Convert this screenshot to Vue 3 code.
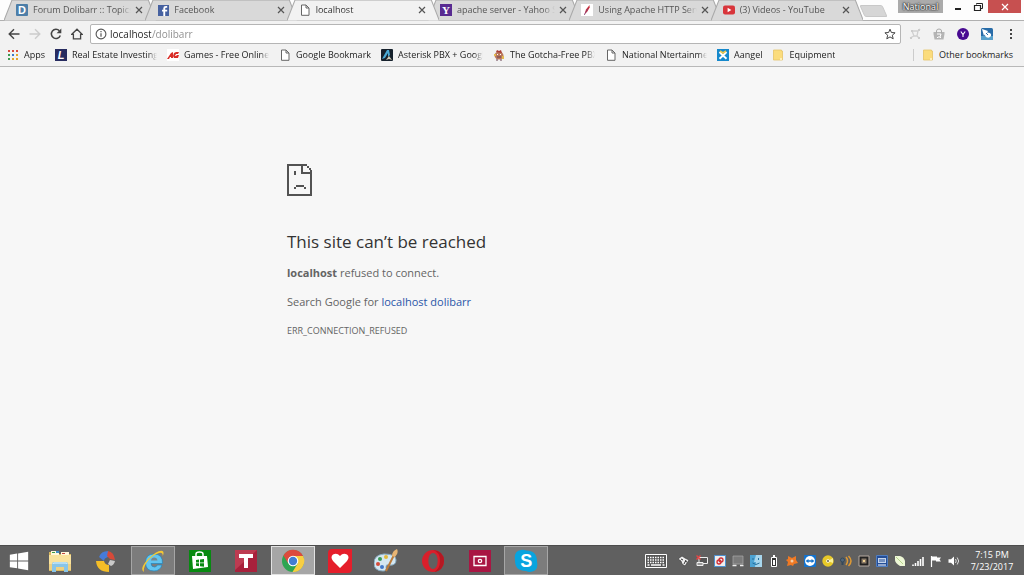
<script setup>
import { ref } from 'vue'

const address = ref('localhost/dolibarr')

const tabs = [
  { title: 'Forum Dolibarr :: Topics', icon: 'dolibarr', letter: 'D' },
  { title: 'Facebook', icon: 'facebook' },
  { title: 'localhost', icon: 'page', active: true },
  { title: 'apache server - Yahoo Search', icon: 'yahoo', letter: 'Y' },
  { title: 'Using Apache HTTP Server', icon: 'feather' },
  { title: '(3) Videos - YouTube', icon: 'youtube' },
]

const bookmarks = [
  { title: 'Apps', icon: 'apps' },
  { title: 'Real Estate Investing', icon: 'estate', letter: 'L' },
  { title: 'Games - Free Online Games', icon: 'games' },
  { title: 'Google Bookmark', icon: 'page' },
  { title: 'Asterisk PBX + Google', icon: 'asterisk' },
  { title: 'The Gotcha-Free PBX', icon: 'gotcha' },
  { title: 'National Ntertainment', icon: 'page' },
  { title: 'Aangel', icon: 'aangel' },
  { title: 'Equipment', icon: 'folder' },
]

const extensions = [
  { name: 'Share', icon: 'ext-share' },
  { name: 'Shopping', icon: 'ext-bag' },
  { name: 'Yahoo', icon: 'ext-yahoo' },
  { name: 'Pointer', icon: 'ext-pointer' },
]

const apps = [
  { name: 'File Explorer', icon: 'explorer' },
  { name: 'Web Companion', icon: 'swirl' },
  { name: 'Internet Explorer', icon: 'ie', state: 'open' },
  { name: 'Store', icon: 'store' },
  { name: 'T', icon: 'tee' },
  { name: 'Chrome', icon: 'chrome', state: 'current' },
  { name: 'Health', icon: 'heart' },
  { name: 'Paint', icon: 'paint' },
  { name: 'Opera', icon: 'opera' },
  { name: 'Recorder', icon: 'recorder' },
  { name: 'Skype', icon: 'skype', state: 'open', letter: 'S' },
]

const tray = [
  'tag', 'remote', 'link', 'display', 'finder', 'battery', 'avast', 'teamviewer',
  'disc', 'sound-wave', 'chip', 'intel', 'leaf', 'signal', 'flag', 'speaker',
]
</script>

<template>
  <div class="desktop">
    <svg class="sprite" aria-hidden="true">
      <symbol id="page" viewBox="0 0 12 12"><path d="M2.500 1h4.500l3 3v7.300H2.500ZM7 1v3h3" fill="#fff" stroke="#666" /></symbol>
      <symbol id="facebook" viewBox="0 0 12 12"><rect x="1" y="1" width="11" height="11" fill="#4661a0" /><path d="M8.200 12V7.500h2V5.800h-2V4.500q0-.8.9-.8h1.100V2H8.800Q6.300 2 6.300 4.300v1.500H5v1.700h1.300V12Z" fill="#fff" /></symbol>
      <symbol id="feather" viewBox="0 0 12 12"><rect width="12" height="12" fill="#fff" /><path d="M3.500 10 5 5.500 8.500 1l.2 2.500L6 8Z" fill="#c9303b" /><path d="m3.300 11 3.500-6.500" stroke="#843a74" stroke-width=".8" /></symbol>
      <symbol id="youtube" viewBox="0 0 12 12"><rect y="1.500" width="12" height="9" rx="2" fill="#d8353b" /><path d="m4.600 3.800 3.800 2.200-3.800 2.200Z" fill="#fff" /></symbol>
      <symbol id="apps" viewBox="0 0 12 12">
        <path d="M1 1h2v2H1ZM5 1h2v2H5ZM9 1h2v2H9Z" fill="#d94a3d" />
        <path d="M1 5h2v2H1Z" fill="#3d9b52" /><path d="M5 5h2v2H5Z" fill="#3b78c9" /><path d="M9 5h2v2H9Z" fill="#e3a52b" />
        <path d="M1 9h2v2H1Z" fill="#3d9b52" /><path d="M5 9h2v2H5ZM9 9h2v2H9Z" fill="#e3a52b" />
      </symbol>
      <symbol id="games" viewBox="0 0 12 12"><rect width="12" height="12" fill="#fff" /><path d="M0 10 4 4l2-1v6H4V8H3l-1 2ZM7 4l2-1h3l-1 2H9L8 7h1l1-1h2l-1 3H7L6 7Z" fill="#d92e28" /></symbol>
      <symbol id="asterisk" viewBox="0 0 12 12"><rect width="12" height="12" rx="1" fill="#16212c" /><path d="M1 10 6 1h2l1 5-2 2V4L4 9Z" fill="#4aa9d4" /><path d="m5 11 3-4 3 4-3-1Z" fill="#d3cdb6" /></symbol>
      <symbol id="gotcha" viewBox="0 0 12 12"><ellipse cx="6" cy="6.500" rx="4.500" ry="4" fill="#b9785d" /><path d="m3 3 1-2 2 1 2-1 1 3Z" fill="#aa3e36" /><path d="M1 5h2v2H1ZM9 7h2v3H9Z" fill="#e3b94e" /><path d="M4 5h1v1H4ZM7 5h1v1H7Z" fill="#fff" /><path d="M4 8h4M3 11h2M7 11h2" stroke="#694150" /></symbol>
      <symbol id="aangel" viewBox="0 0 12 12"><rect width="12" height="12" fill="#1689cc" /><path d="m2.500 3 3.500 3.500L9.500 3M2.500 9.700 6 6.500l3.500 3.200" fill="none" stroke="#fff" stroke-width="2" /><path d="m3 2 3 2 3-2" fill="none" stroke="#f1c94f" stroke-width="1.600" /></symbol>
      <symbol id="folder" viewBox="0 0 12 12"><path d="M1.500 1h8v1h1v9h-9Z" fill="#fbdc7c" stroke="#e6c467" stroke-width=".8" /><path d="M8 9h2v2H8Z" fill="#fff0b5" /></symbol>

      <symbol id="back" viewBox="0 0 12 12"><path d="M11.500 6H1.500M6 1.200 1.200 6 6 10.800" fill="none" stroke="currentColor" stroke-width="1.400" /></symbol>
      <symbol id="forward" viewBox="0 0 12 12"><path d="M.5 6h10M6 1.200 10.800 6 6 10.800" fill="none" stroke="currentColor" stroke-width="1.400" /></symbol>
      <symbol id="reload" viewBox="0 0 12 12"><path d="M10.300 7.500A4.600 4.600 0 1 1 9.400 2.800" fill="none" stroke="currentColor" stroke-width="1.500" /><path d="M11.300.6v4.700H6.600Z" fill="currentColor" /></symbol>
      <symbol id="home" viewBox="0 0 12 12"><path d="M.8 6.300 6 1.200l5.200 5.100H9.600v4.600H2.400V6.300Z" fill="none" stroke="currentColor" stroke-width="1.300" /></symbol>
      <symbol id="info" viewBox="0 0 12 12"><circle cx="6" cy="6" r="4.900" fill="none" stroke="#555" stroke-width="1.100" /><path d="M6 5.200v3.500M6 3v1.200" stroke="#555" stroke-width="1.200" /></symbol>
      <symbol id="star" viewBox="0 0 12 12"><path d="m6 1.200 1.400 3.300 3.700.3-2.800 2.400.9 3.600L6 8.900l-3.200 1.900.9-3.600L.9 4.800l3.700-.3Z" fill="none" stroke="#444" /></symbol>
      <symbol id="ext-share" viewBox="0 0 12 12"><path d="M3 3h6L8 8H5L1 10M9 3l2-2M8 8l2 2M3 3l2 5" fill="none" stroke="#d0d0d0" stroke-width="1.300" /><path d="M2 2h2v2H2ZM9 1h2v2H9ZM1 9h2v2H1ZM9 9h2v2H9Z" fill="#ccc" /></symbol>
      <symbol id="ext-bag" viewBox="0 0 12 12"><path d="M.5 4h11v2l-1 5.500h-9L.5 6Z" fill="#b5b5b5" /><path d="M3.500 5V3q0-2 2.500-2t2.500 2v2" fill="none" stroke="#aaa" /><path d="M4 6h4L7 9H5l-1 1M7 9l1 1" fill="none" stroke="#fff" /></symbol>
      <symbol id="ext-yahoo" viewBox="0 0 12 12"><circle cx="6" cy="6" r="6" fill="#480a91" /><path d="m3.800 3.500 2.200 3 2.200-3M6 6.500V9" fill="none" stroke="#fff" stroke-width="1.100" /></symbol>
      <symbol id="ext-pointer" viewBox="0 0 12 12"><rect width="12" height="12" rx="1.500" fill="#286ca8" /><path d="M0 8h12v3q0 1-1 1H1q-1 0-1-1Z" fill="#57a0cb" /><path d="M1 1 7 3 6 4.500q5 0 4 3.500-2 3-5 1L3.500 6.500 3 8Z" fill="#fff" /><path d="m5 5 2 2" stroke="#286ca8" /></symbol>
      <symbol id="menu" viewBox="0 0 12 12"><path d="M5 1h2v2H5ZM5 5h2v2H5ZM5 9h2v2H5Z" fill="#444" /></symbol>
      <symbol id="close" viewBox="0 0 12 12"><path d="m3 3 6 6M9 3 3 9" stroke="currentColor" stroke-width="1.200" /></symbol>
      <symbol id="minimize" viewBox="0 0 12 12"><path d="M3 8h6" stroke="#222" stroke-width="2" /></symbol>
      <symbol id="restore" viewBox="0 0 12 12"><path d="M4.500 3.500v-1h6v5H9" fill="none" stroke="#222" /><path d="M2.500 4.500h6v5h-6Z" fill="none" stroke="#222" stroke-width="1.200" /></symbol>

      <symbol id="windows" viewBox="0 0 24 24"><path d="m2 5.200 8-1.300v7.500H2ZM11 3.700l11-1.800v9.500H11ZM2 12.500h8V20l-8-1.300ZM11 12.500h11V22l-11-1.800Z" fill="#fff" /></symbol>
      <symbol id="explorer" viewBox="0 0 24 24">
        <path d="M1 3h9l1 2h12v17H1Z" fill="#d9b85e" /><path d="M3 2h8v4H3ZM13 3h8v4h-8Z" fill="#fff7db" />
        <path d="M4 3h3v1H4Z" fill="#3a9b4b" /><path d="M14 4h3v1h-3Z" fill="#c2473d" /><path d="M8 2h3v2H8Z" fill="#438dc7" />
        <path d="M1 6h22v15H1Z" fill="#f9e29c" /><path d="M1 15h22v6H1Z" fill="#eed183" />
        <path d="M4 23v-8q0-2 2-2h12q2 0 2 2v8h-4v-5H8v5Z" fill="#88c5e8" /><path d="M5 15q0-1 1-1h12q1 0 1 1" fill="none" stroke="#dff4ff" />
      </symbol>
      <symbol id="swirl" viewBox="0 0 24 24"><path d="M5 8q2-6 9-6v6q-4 1-4 4l-5-4Z" fill="#467bd8" /><path d="M14 2q6 1 7 9l-5-1-3-3Z" fill="#d64a39" /><path d="M2 12h8q1 4 5 4v7Q3 23 2 12Z" fill="#f4bd27" /><path d="m16 11 5 1q-1 4-4 5l-3-2Z" fill="#c9c9c9" /></symbol>
      <symbol id="ie" viewBox="0 0 24 24">
        <path d="M21 16q-2 6-8 6-8.500 0-8.500-8.500T13 5q9 0 8.500 9.500H10q.3 3.500 3.500 3.500 2 0 2.800-2Z" fill="#62c5f0" stroke="#2385bd" stroke-width=".7" /><path d="M10 11.500h6.500Q16 8.500 13.200 8.500T10 11.500Z" fill="#77868f" />
        <path d="M3 23Q-2 20 7 10 17 .5 21.500 2q2 1 .2 5Q22 3 18 4 12 5.500 6 13q-4 6-3 10Z" fill="#f5c832" />
      </symbol>
      <symbol id="store" viewBox="0 0 24 24"><path d="M1 1h22v22H1Z" fill="#078a10" /><path d="M4 7h15l1 11-15 2Z" fill="#fff" /><path d="M8 9V5q0-2 3.500-2T15 5v4" fill="none" stroke="#fff" stroke-width="1.500" /><path d="m8 11 3-.4v2.900H8ZM12 10.500l4-.5v3.500h-4ZM8 14.300h3v2.900l-3-.4ZM12 14.300h4v3.500l-4-.5Z" fill="#078a10" /></symbol>
      <symbol id="tee" viewBox="0 0 24 24"><path d="M1 1h22v22H1Z" fill="#a8213c" /><path d="M1 1h22L1 21Z" fill="#bd3b51" /><path d="M5 5h14v4h-5v10h-4V9H5Z" fill="#fff" /></symbol>
      <symbol id="chrome" viewBox="0 0 24 24"><circle cx="12" cy="12" r="11" fill="#2da552" /><path d="M2.500 6.500A11 11 0 0 1 22 7H12L7 14Z" fill="#dc4a3d" /><path d="M12 7h10A11 11 0 0 1 11.500 23L17 14Z" fill="#f8ce42" /><circle cx="12" cy="12" r="5.300" fill="#fff" /><circle cx="12" cy="12" r="4.200" fill="#427ed2" /></symbol>
      <symbol id="heart" viewBox="0 0 24 24"><path d="M4 0h20v20q0 4-4 4H0V4q0-4 4-4Z" fill="#e51e2b" /><path d="M12 19 5 12Q2 8 5 5.500q4-2 7 1.500 3-3.500 7-1.500 3 2.500 0 6.500Z" fill="#fff" /></symbol>
      <symbol id="paint" viewBox="0 0 24 24"><path d="M10 5Q0 6 0 14q0 8 9 8 4 0 3-4-.5-3 3-2 7 1 7-5 0-6-12-6Z" fill="#d4e7f2" stroke="#8aaec5" /><circle cx="6" cy="10" r="2" fill="#3a9a57" /><circle cx="12" cy="8" r="2" fill="#e3b93b" /><circle cx="4" cy="15" r="2" fill="#d34c3b" /><circle cx="8" cy="18" r="2" fill="#4178ca" /><path d="m12 22 8-16" stroke="#bb7b3b" stroke-width="2" /><path d="M18 7q0-5 5-7 2 4-2 8Z" fill="#e8b574" /></symbol>
      <symbol id="opera" viewBox="0 0 24 24"><circle cx="12" cy="12" r="11" fill="#d91f2b" /><path d="M12 1q11 1 11 11T12 23q7-2 7-11T12 1Z" fill="#b41822" /><ellipse cx="12" cy="12" rx="4.700" ry="8" fill="#606060" /></symbol>
      <symbol id="recorder" viewBox="0 0 24 24"><path d="M1 1h22v22H1Z" fill="#a91643" /><path d="M6 7.500h12v9H6Z" fill="none" stroke="#fff" stroke-width="1.300" /><circle cx="12" cy="12" r="2.300" fill="#fff" /><circle cx="12" cy="12" r="1" fill="#a91643" /></symbol>
      <symbol id="skype" viewBox="0 0 24 24"><path d="M7 1q3-.5 5 .5 11 0 11 11 2 10-7 10.500-2 0-4-1Q1 22 1 11.500-.5 2 7 1Z" fill="#08a4df" /></symbol>

      <symbol id="keyboard" viewBox="0 0 22 14"><path d="M.5.5h21v13H.5Z" fill="#555" stroke="#fff" /><path d="M2.500 3.500h17M2.500 6h17M2.500 8.500h17" stroke="#fff" stroke-width="1.500" stroke-dasharray="1.500 1" /><path d="M2.500 11h2M6 11h10M17.500 11h2" stroke="#fff" stroke-width="1.500" /></symbol>
      <symbol id="tag" viewBox="0 0 12 12"><path d="m0 4 4-3 3 2 4 2-4 6-3-2-1-3Z" fill="#eee" stroke="#333" stroke-width=".6" /><path d="m3 4 2 1M8 5 6 9M7 6l2 1" stroke="#333" /></symbol>
      <symbol id="remote" viewBox="0 0 12 12"><path d="M3 2.500h8.500v6H3Z" fill="#555" stroke="#eee" /><path d="M1 7.500h6v3H1Z" fill="#999" stroke="#eee" /><path d="m.5.500 4 4m0-4-4 4" stroke="#e34646" stroke-width="1.400" /></symbol>
      <symbol id="link" viewBox="0 0 12 12"><path d="M.5.5h11v11H.5Z" fill="#eee" stroke="#4d91d1" /><ellipse cx="5" cy="7" rx="2" ry="2" fill="none" stroke="#d22e35" stroke-width="1.300" /><ellipse cx="7" cy="5" rx="2" ry="2" fill="none" stroke="#d22e35" stroke-width="1.300" /></symbol>
      <symbol id="display" viewBox="0 0 12 12"><path d="M1 1h10v8H1Z" fill="#7b7b7b" stroke="#aaa" stroke-width=".7" /><path d="M.5 10.500h4M8 10.500h3.500" stroke="#eee" stroke-width="1.300" /></symbol>
      <symbol id="finder" viewBox="0 0 12 12"><path d="M0 0h12v12H0Z" fill="#4da3d3" /><path d="M6 0h6v12H5l1-5H4Z" fill="#a7d6ed" /><path d="M3 3v2M8.500 3v2M2.500 8Q6 11 9.500 8" fill="none" stroke="#246e9b" /></symbol>
      <symbol id="battery" viewBox="0 0 12 12"><path d="M3.500 2.500h5v9h-5Z" fill="#333" stroke="#fff" /><path d="M5 0h2v2H5ZM5 5h2v5H5Z" fill="#fff" /></symbol>
      <symbol id="avast" viewBox="0 0 12 12"><path d="m2 1 4 2 4-2v4l2 3-4 1-1 2-2-1-4 1 1-4-2-2 2-1Z" fill="#ef7924" /><circle cx="6" cy="6" r="1.500" fill="#f4cba4" /></symbol>
      <symbol id="teamviewer" viewBox="0 0 12 12"><rect width="12" height="12" rx="1" fill="#1373ce" /><circle cx="6" cy="6" r="5" fill="#fff" /><path d="m1.500 6 3-2v1.300h3V4l3 2-3 2V6.700h-3V8Z" fill="#1373ce" /></symbol>
      <symbol id="disc" viewBox="0 0 12 12"><circle cx="6" cy="6" r="5.700" fill="#e8c928" /><path d="m6 6 5-3v5Z" fill="#f8f099" /><circle cx="6" cy="6" r="1.800" fill="#fff" /><circle cx="6" cy="6" r=".9" fill="#5a532c" /></symbol>
      <symbol id="sound-wave" viewBox="0 0 12 12"><circle cx="2.500" cy="5" r="2" fill="#536678" stroke="#34495b" /><path d="M2.500 7v3" stroke="#34495b" stroke-width="2" /><path d="M6 2q3 4 0 8M8.500 1q5 5 0 10" fill="none" stroke="#dd9935" stroke-width="1.500" /></symbol>
      <symbol id="chip" viewBox="0 0 12 12"><path d="M1 1h10v10H1Z" fill="#222" stroke="#b5a9a0" /><path d="M3.500 3.500h5v5h-5Z" fill="#8b7b68" /><path d="M5 5h2v2H5Z" fill="#f2d493" /></symbol>
      <symbol id="intel" viewBox="0 0 12 12"><path d="M.5.5h11v11H.5Z" fill="#244e98" stroke="#507ec1" /><path d="M2 3h8v5H2Z" fill="#c4d4eb" /><path d="M2 10h8" stroke="#fff" /><path d="M4 4v3M6 4v3M8 4v3" stroke="#244e98" /></symbol>
      <symbol id="leaf" viewBox="0 0 12 12"><path d="M1 1h5q4 1 5 5v5H6Q1 8 1 5Z" fill="#edf7d5" /><path d="m2 2 7 7" stroke="#b5d48b" /></symbol>
      <symbol id="signal" viewBox="0 0 12 12"><path d="M1 11V9.500M3.500 11V8M6 11V6M8.500 11V4M11 11V2" stroke="#fff" stroke-width="1.600" /></symbol>
      <symbol id="flag" viewBox="0 0 12 12"><path d="M1.500 1v11" stroke="#fff" stroke-width="1.200" /><path d="M2 1.500h5v1h4l-1.500 2 1.500 2H6v-1H2Z" fill="#fff" /></symbol>
      <symbol id="speaker" viewBox="0 0 12 12"><path d="M.5 4.300H3L6 1.500v9L3 7.700H.5Z" fill="#fff" /><path d="M7.500 4q1.500 2 0 4M9.200 2.500q3 3.500 0 7" fill="none" stroke="#ddd" /></symbol>
    </svg>

    <header class="browser">
      <div class="titlebar">
        <nav class="tabs" aria-label="Tabs">
          <div v-for="tab in tabs" :key="tab.title" class="tab" :class="{ active: tab.active }">
            <svg class="tab-shape" viewBox="0 0 152 21" preserveAspectRatio="none" aria-hidden="true"><path d="M0 20.500 8 0H144L152 20.500" /></svg>
            <button class="tab-label">
              <span v-if="tab.letter" class="letter" :class="tab.icon">{{ tab.letter }}</span>
              <svg v-else class="icon"><use :href="'#' + tab.icon" /></svg>
              <span class="fade">{{ tab.title }}</span>
            </button>
            <button class="tab-close" :aria-label="'Close ' + tab.title"><svg class="icon"><use href="#close" /></svg></button>
          </div>
        </nav>
        <button class="new-tab" aria-label="New tab"></button>
        <div class="window-controls">
          <button class="profile">National</button>
          <button class="control" aria-label="Minimize"><svg class="icon"><use href="#minimize" /></svg></button>
          <button class="control" aria-label="Restore"><svg class="icon"><use href="#restore" /></svg></button>
          <button class="control quit" aria-label="Close window"><svg class="icon"><use href="#close" /></svg></button>
        </div>
      </div>

      <div class="toolbar">
        <div class="nav-buttons">
          <button aria-label="Back"><svg class="icon"><use href="#back" /></svg></button>
          <button aria-label="Forward" disabled><svg class="icon"><use href="#forward" /></svg></button>
          <button aria-label="Reload"><svg class="icon"><use href="#reload" /></svg></button>
          <button aria-label="Home"><svg class="icon"><use href="#home" /></svg></button>
        </div>
        <div class="omnibox">
          <svg class="icon" aria-hidden="true"><use href="#info" /></svg>
          <input v-model="address" type="text" aria-label="Address" spellcheck="false" />
          <button aria-label="Bookmark this page"><svg class="icon"><use href="#star" /></svg></button>
        </div>
        <div class="extensions">
          <button v-for="ext in extensions" :key="ext.name" :aria-label="ext.name"><svg class="icon"><use :href="'#' + ext.icon" /></svg></button>
          <button aria-label="Menu"><svg class="icon"><use href="#menu" /></svg></button>
        </div>
      </div>

      <nav class="bookmarks" aria-label="Bookmarks">
        <a v-for="mark in bookmarks" :key="mark.title" href="#" class="bookmark">
          <span v-if="mark.letter" class="letter" :class="mark.icon">{{ mark.letter }}</span>
          <svg v-else class="icon"><use :href="'#' + mark.icon" /></svg>
          <span class="fade">{{ mark.title }}</span>
        </a>
        <a href="#" class="bookmark other"><svg class="icon"><use href="#folder" /></svg><span>Other bookmarks</span></a>
      </nav>
    </header>

    <main class="page">
      <section class="error">
        <svg class="sad-page" viewBox="0 0 25 32" shape-rendering="crispEdges" aria-hidden="true">
          <path d="M0 0h20v2H2v28h21V10H14V2h2v6h7V6h2v26H0ZM20 2h2v2h-2ZM22 4h2v2h-2ZM7 7h2v4H7ZM9 21h8v2H9ZM7 23h2v2H7ZM17 23h2v2h-2Z" fill="#535353" />
        </svg>
        <h1>This site can’t be reached</h1>
        <p><strong>localhost</strong> refused to connect.</p>
        <p>Search Google for <a href="#">localhost dolibarr</a></p>
        <p class="code">ERR_CONNECTION_REFUSED</p>
      </section>
    </main>

    <footer class="taskbar">
      <button class="start" aria-label="Start"><svg><use href="#windows" /></svg></button>
      <div class="apps">
        <button v-for="app in apps" :key="app.name" class="app" :class="app.state" :aria-label="app.name">
          <svg><use :href="'#' + app.icon" /></svg>
          <span v-if="app.letter" class="app-letter">{{ app.letter }}</span>
        </button>
      </div>
      <div class="tray">
        <button class="keyboard" aria-label="Touch keyboard"><svg><use href="#keyboard" /></svg></button>
        <button v-for="item in tray" :key="item" class="tray-item" :aria-label="item"><svg class="icon"><use :href="'#' + item" /></svg></button>
        <button class="clock"><span>7:15 PM</span><span>7/23/2017</span></button>
      </div>
    </footer>
  </div>
</template>

<style>
body {
  background: #f7f7f7;
}
</style>

<style scoped>
.desktop {
  display: flex;
  flex-direction: column;
  min-height: 100vh;
  background: #f7f7f7;
  color: #333;
  font: 9px/12px "Open Sans", "Noto Sans", sans-serif;
}
.desktop * {
  box-sizing: border-box;
}
.sprite {
  position: absolute;
  width: 0;
  height: 0;
}
button {
  display: flex;
  align-items: center;
  justify-content: center;
  padding: 0;
  border: 0;
  background: none;
  color: inherit;
  font: inherit;
}
a {
  color: inherit;
  text-decoration: none;
}
svg {
  display: block;
  flex: none;
}
.icon {
  width: 12px;
  height: 12px;
}
.letter {
  flex: none;
  width: 12px;
  height: 12px;
  color: #fff;
  font: 700 11px/12px "Liberation Sans", sans-serif;
  text-align: center;
}
.dolibarr {
  border-radius: 1px;
  background: #4d7ea8;
}
.yahoo {
  background: #582a91;
  font-family: "Liberation Serif", serif;
}
.estate {
  background: #272c60;
  font-style: italic;
}
.fade {
  overflow: hidden;
  white-space: nowrap;
}

.titlebar {
  display: flex;
  height: 21px;
  padding-left: 4px;
  border-bottom: 1px solid #b0b0b0;
  background: #fdfdfd;
}
.tabs {
  display: flex;
  flex: 0 1 848px;
  min-width: 0;
}
.tab {
  position: relative;
  display: flex;
  flex: 1 1 0;
  align-items: center;
  height: 20px;
  min-width: 0;
  padding-left: 12px;
}
.tab-shape {
  position: absolute;
  top: 0;
  left: 0;
  width: calc(100% + 11px);
  height: 21px;
  fill: #d9d9d9;
  stroke: #a9a9a9;
}
.tab.active {
  z-index: 1;
}
.active .tab-shape {
  fill: #f2f2f2;
}
.tab-label {
  position: relative;
  flex: 1;
  justify-content: flex-start;
  gap: 5px;
  min-width: 0;
  color: #555;
}
.active .tab-label {
  color: #333;
}
.tab-label .fade {
  flex: 1;
  text-align: left;
  mask-image: linear-gradient(to left, transparent 2px, #000 14px);
}
.tab-close {
  position: relative;
  color: #555;
}
.new-tab {
  width: 23px;
  height: 12px;
  margin: 5px 0 0 10px;
  border: 1px solid #c8c8c8;
  border-radius: 2px;
  background: #d6d6d6;
  transform: skewX(24deg);
}
.window-controls {
  display: flex;
  align-items: flex-start;
  margin-left: auto;
  padding-right: 3px;
}
.profile {
  width: 45px;
  height: 13px;
  margin-right: 5px;
  background: #ababab;
  color: #fff;
  text-shadow: 0 0 1px #222, 0 0 2px #222, 0 0 2px #222;
}
.control {
  width: 20px;
  height: 13px;
}
.quit {
  width: 33px;
  background: #c75050;
  color: #fff;
}

.toolbar {
  display: flex;
  align-items: center;
  padding: 3px 1px 0 3px;
  background: #f2f2f2;
}
.nav-buttons {
  display: flex;
  color: #444;
}
.nav-buttons button {
  width: 21px;
  height: 20px;
}
.nav-buttons button:disabled {
  color: #ccc;
}
.omnibox {
  display: flex;
  flex: 1;
  align-items: center;
  gap: 3px;
  height: 20px;
  margin: 0 2px 0 3px;
  padding: 0 4px;
  border: 1px solid #b5b5b5;
  border-radius: 2px;
  background: #fff;
}
.omnibox input {
  flex: 1;
  min-width: 0;
  padding: 0;
  border: 0;
  outline: 0;
  background: linear-gradient(to right, #222 41px, #8a8a8a 41px) text;
  color: transparent;
  font: 10px/16px "Open Sans", "Noto Sans", sans-serif;
}
.extensions {
  display: flex;
}
.extensions button {
  width: 24px;
  height: 20px;
}

.bookmarks {
  display: flex;
  align-items: center;
  gap: 10px;
  height: 23px;
  padding: 0 11px 0 7px;
  border-bottom: 1px solid #b8b8b8;
  background: #f2f2f2;
}
.bookmark {
  display: flex;
  align-items: center;
  gap: 5px;
  color: #222;
  white-space: nowrap;
}
.bookmark .fade {
  max-width: 85px;
  mask-image: linear-gradient(to right, #000 76px, transparent 85px);
}
.other {
  margin-left: auto;
  padding-left: 8px;
  border-left: 1px solid #ccc;
}

.page {
  flex: 1;
  padding: 97px 24px 24px;
}
.error {
  max-width: 450px;
  margin: 0 auto;
  color: #646464;
  font-size: 11px;
  line-height: 17px;
}
.sad-page {
  width: 25px;
  height: 32px;
}
h1 {
  margin: 34px 0 10px;
  color: #333;
  font-size: 17px;
  font-weight: 400;
  line-height: 24px;
}
p {
  margin: 0 0 12px;
}
.error a {
  color: #2a56a8;
}
.error .code {
  margin: 0;
  font-size: 9px;
}

.taskbar {
  display: flex;
  height: 30px;
  border-top: 1px solid #4d4d4d;
  background: #606060;
  color: #fff;
}
.start {
  width: 38px;
}
.start svg {
  width: 24px;
  height: 22px;
}
.apps {
  display: flex;
  flex: 0 1 510px;
  gap: 3px;
}
.app {
  position: relative;
  flex: 1;
  border: 1px solid transparent;
}
.app svg {
  width: 24px;
  height: 24px;
}
.app-letter {
  position: absolute;
  inset: 0;
  font: 700 18px/28px "Liberation Sans", sans-serif;
  text-align: center;
}
.app.open {
  border-color: #a6a6a6;
  background: #7c7c7c;
}
.app.current {
  border-color: #e2e2e2;
  background: #a6a6a6;
}
.tray {
  display: flex;
  margin-left: auto;
  padding-right: 10px;
}
.keyboard {
  margin-right: 8px;
}
.keyboard svg {
  width: 22px;
  height: 14px;
}
.tray-item {
  width: 18px;
}
.clock {
  flex-direction: column;
  width: 44px;
  margin-left: 7px;
}
</style>
